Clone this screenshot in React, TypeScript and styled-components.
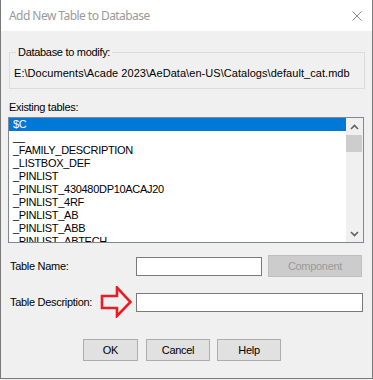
import React from 'react';
import styled, { createGlobalStyle } from 'styled-components';

const Global = createGlobalStyle`
  html, body { margin: 0; padding: 0; background: #f0f0f0; }
  * { box-sizing: border-box; }
`;

const Window = styled.div`
  width: 373px;
  height: 379px;
  display: flex;
  flex-direction: column;
  border: 1px solid #7a7a7a;
  border-top: none;
  background: #f0f0f0;
  font-family: "Liberation Sans", Arial, sans-serif;
  font-size: 11px;
  letter-spacing: -0.3px;
  color: #000;
`;

const TitleBar = styled.div`
  height: 31px;
  flex: 0 0 31px;
  background: #fff;
  display: flex;
  align-items: center;
  padding-left: 8px;
  padding-right: 10px;
`;

const TitleText = styled.div`
  font-family: "Noto Sans", "Open Sans", sans-serif;
  font-size: 12px;
  letter-spacing: -0.55px;
  color: #9a9a9a;
  padding-bottom: 1px;
`;

const CloseIcon = styled.svg`
  margin-left: auto;
  width: 10px;
  height: 10px;
`;

const Body = styled.div`
  flex: 1;
  display: flex;
  flex-direction: column;
  padding: 15px 7px 0 8px;
`;

const GroupBox = styled.fieldset`
  margin: 0;
  padding: 0 4px 8px 4px;
  border: 1px solid #dcdcdc;
  min-width: 0;
`;

const Legend = styled.legend`
  margin-left: 2px;
  padding: 0 2px;
  line-height: 13px;
`;

const PathText = styled.div`
  margin-top: 8px;
  line-height: 13px;
  letter-spacing: 0.05px;
  white-space: nowrap;
`;

const SectionLabel = styled.div`
  margin-top: 12px;
  line-height: 13px;
`;

const ListBox = styled.div`
  margin: 3px 1px 0 -1px;
  height: 126px;
  border: 1px solid #828790;
  background: #fff;
  display: flex;
  overflow: hidden;
`;

const Items = styled.div`
  flex: 1;
  overflow: hidden;
`;

const Item = styled.div<{ $selected?: boolean }>`
  height: 13px;
  line-height: 13px;
  padding-left: 4px;
  white-space: nowrap;
  background: ${p => (p.$selected ? '#0078d7' : 'transparent')};
  color: ${p => (p.$selected ? '#fff' : '#000')};
`;

const ScrollBar = styled.div`
  width: 17px;
  flex: 0 0 17px;
  background: #f0f0f0;
  display: flex;
  flex-direction: column;
`;

const ScrollButton = styled.div`
  height: 17px;
  display: flex;
  align-items: center;
  justify-content: center;
`;

const Thumb = styled.div`
  height: 17px;
  margin-right: 1px;
  background: #cdcdcd;
`;

const Track = styled.div`
  flex: 1;
`;

const FormRow = styled.div<{ $top: number; $height: number }>`
  display: flex;
  align-items: center;
  margin-top: ${p => p.$top}px;
  height: ${p => p.$height}px;
`;

const LabelCell = styled.div`
  width: 127px;
  padding-left: 1px;
  display: flex;
  align-items: center;
  height: 100%;
`;

const Label = styled.span`
  line-height: 13px;
`;

const TextInput = styled.div<{ $width: number }>`
  width: ${p => p.$width}px;
  height: 19px;
  border: 1px solid #7a7a7a;
  background: #fff;
`;

const Button = styled.div<{ $width: number; $disabled?: boolean }>`
  width: ${p => p.$width}px;
  height: 22px;
  display: flex;
  align-items: center;
  justify-content: center;
  background: ${p => (p.$disabled ? '#cccccc' : '#e1e1e1')};
  border: 1px solid ${p => (p.$disabled ? '#bfbfbf' : '#adadad')};
  color: ${p => (p.$disabled ? '#9a9a9a' : '#000')};
  padding-bottom: 1px;
`;

const ButtonRow = styled.div`
  display: flex;
  margin-top: 21px;
  padding-left: 74px;
  gap: 8px;
`;

const ArrowIcon = styled.svg`
  margin-left: auto;
  margin-right: 4px;
  width: 32px;
  height: 32px;
`;

const tables = [
  '$C',
  '__',
  '_FAMILY_DESCRIPTION',
  '_LISTBOX_DEF',
  '_PINLIST',
  '_PINLIST_430480DP10ACAJ20',
  '_PINLIST_4RF',
  '_PINLIST_AB',
  '_PINLIST_ABB',
  '_PINLIST_ABTECH',
];

export default function App() {
  return (
    <>
      <Global />
      <Window>
        <TitleBar>
          <TitleText>Add New Table to Database</TitleText>
          <CloseIcon viewBox="0 0 10 10">
            <path d="M0.5 0.5 L9.5 9.5 M9.5 0.5 L0.5 9.5" stroke="#8a8a8a" strokeWidth="1" fill="none" />
          </CloseIcon>
        </TitleBar>
        <Body>
          <GroupBox>
            <Legend>Database to modify:</Legend>
            <PathText>E:\Documents\Acade 2023\AeData\en-US\Catalogs\default_cat.mdb</PathText>
          </GroupBox>
          <SectionLabel>Existing tables:</SectionLabel>
          <ListBox>
            <Items>
              {tables.map((t, i) => (
                <Item key={t} $selected={i === 0}>{t}</Item>
              ))}
            </Items>
            <ScrollBar>
              <ScrollButton>
                <svg width="9" height="6" viewBox="0 0 9 6">
                  <path d="M1 5 L4.5 1.5 L8 5" stroke="#606060" strokeWidth="1.6" fill="none" />
                </svg>
              </ScrollButton>
              <Thumb />
              <Track />
              <ScrollButton>
                <svg width="9" height="6" viewBox="0 0 9 6">
                  <path d="M1 1 L4.5 4.5 L8 1" stroke="#606060" strokeWidth="1.6" fill="none" />
                </svg>
              </ScrollButton>
            </ScrollBar>
          </ListBox>
          <FormRow $top={12} $height={22}>
            <LabelCell>
              <Label>Table Name:</Label>
            </LabelCell>
            <TextInput $width={126} />
            <Button $width={94} $disabled style={{ marginLeft: 6 }}>Component</Button>
          </FormRow>
          <FormRow $top={9} $height={32}>
            <LabelCell>
              <Label>Table Description:</Label>
              <ArrowIcon viewBox="0 0 32 32">
                <polygon
                  points="2,10 17,10 17,1.5 30.5,16 17,30 17,22 2,22"
                  fill="none"
                  stroke="#ed1c24"
                  strokeWidth="2.6"
                  strokeLinejoin="miter"
                />
              </ArrowIcon>
            </LabelCell>
            <TextInput $width={227} />
          </FormRow>
          <ButtonRow>
            <Button $width={55}>OK</Button>
            <Button $width={64}>Cancel</Button>
            <Button $width={64} style={{ marginLeft: -1 }}>Help</Button>
          </ButtonRow>
        </Body>
      </Window>
    </>
  );
}
